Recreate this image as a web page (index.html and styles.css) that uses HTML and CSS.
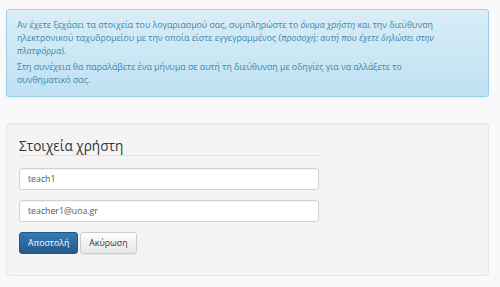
FILE: index.html
```html
<!DOCTYPE html>
<html lang="el">
	<head>
		<meta charset="utf-8">
		<meta name="viewport" content="width=device-width, initial-scale=1.0">
		<title>Ανάκτηση συνθηματικού</title>
		<link rel="stylesheet" href="styles.css">
	</head>
	<body>
		<div class="page">
			<div class="alert">
				<p>Αν έχετε ξεχάσει τα στοιχεία του λογαριασμού σας, συμπληρώστε το <em>όνομα χρήστη</em> και την διεύθυνση ηλεκτρονικού ταχυδρομείου με την οποία είστε εγγεγραμμένος (<em>προσοχή:</em> <em>αυτή που έχετε δηλώσει στην</em> <em>πλατφόρμα</em>).</p>
				<p>Στη συνέχεια θα παραλάβετε ένα μήνυμα σε αυτή τη διεύθυνση με οδηγίες για να αλλάξετε το συνθηματικό σας.</p>
			</div>
			<div class="well">
				<form class="form">
					<fieldset>
						<legend>Στοιχεία χρήστη</legend>
						<div class="form-group"><input class="form-control" type="text" name="userName" value="teach1"></div>
						<div class="form-group"><input class="form-control" type="text" name="email" value="teacher1@uoa.gr"></div>
						<div class="actions">
							<button type="submit" class="btn btn-primary">Αποστολή</button>
							<button type="button" class="btn btn-default">Ακύρωση</button>
						</div>
					</fieldset>
				</form>
			</div>
		</div>
	</body>
</html>
```
FILE: styles.css
```css
body { margin:0; background:#f9f9f9; font-family:"Open Sans","DejaVu Sans",sans-serif; font-size:8.75px; line-height:13px; color:#333 }
.page { padding:9px 11px 0 6px }
.alert { padding:9px 34px 9px 10px; margin-bottom:26px; border:1px solid #9acfea; border-radius:3px; color:#3a87ad; background:linear-gradient(#d9edf7,#bfe1f2); box-shadow:inset 0 1px 0 rgba(255,255,255,.25), 0 1px 2px rgba(0,0,0,.05) }
.alert p { margin:0 }
.alert p + p { margin-top:3px }
.well { padding:12px 12px 21px; border:1px solid #e8e8e8; border-radius:3px; background:#f4f4f4; box-shadow:inset 0 1px 2px rgba(0,0,0,.04) }
.form { width:300px }
fieldset { margin:0; padding:0; border:0; min-width:0 }
legend { display:block; width:100%; padding:0; margin-bottom:12px; font-size:13.6px; line-height:19px; color:#333; border-bottom:1px solid #e3e3e3 }
.form-group { margin-bottom:10px }
.form-control { display:block; box-sizing:border-box; width:100%; height:22px; padding:4px 8px; font-family:inherit; font-size:8.75px; color:#555; background:#fff; border:1px solid #d3d3d3; border-radius:3px; box-shadow:inset 0 1px 1px rgba(0,0,0,.05) }
.actions { display:flex; gap:2px }
.btn { box-sizing:border-box; height:22px; padding:4px 8px; font-family:inherit; font-size:8.75px; line-height:13px; border:1px solid transparent; border-radius:3px }
.btn-primary { color:#fff; background:linear-gradient(#337ab7,#265a88); border-color:#245580 }
.btn-default { color:#333; background:linear-gradient(#fff,#e6e6e6); border-color:#ccc; box-shadow:0 1px 1px rgba(0,0,0,.05) }
```
